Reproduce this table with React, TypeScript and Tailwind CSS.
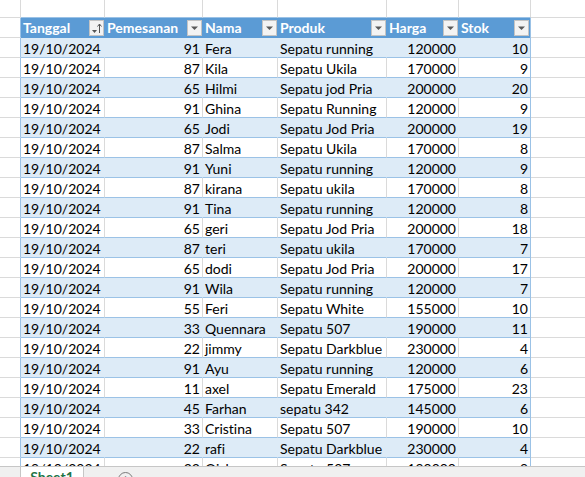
import React from 'react';

type Row = [string, number, string, string, number, number];

const rows: Row[] = [
  ['19/10/2024', 91, 'Fera', 'Sepatu running', 120000, 10],
  ['19/10/2024', 87, 'Kila', 'Sepatu Ukila', 170000, 9],
  ['19/10/2024', 65, 'Hilmi', 'Sepatu jod Pria', 200000, 20],
  ['19/10/2024', 91, 'Ghina', 'Sepatu Running', 120000, 9],
  ['19/10/2024', 65, 'Jodi', 'Sepatu Jod Pria', 200000, 19],
  ['19/10/2024', 87, 'Salma', 'Sepatu Ukila', 170000, 8],
  ['19/10/2024', 91, 'Yuni', 'Sepatu running', 120000, 9],
  ['19/10/2024', 87, 'kirana', 'Sepatu ukila', 170000, 8],
  ['19/10/2024', 91, 'Tina', 'Sepatu running', 120000, 8],
  ['19/10/2024', 65, 'geri', 'Sepatu Jod Pria', 200000, 18],
  ['19/10/2024', 87, 'teri', 'Sepatu ukila', 170000, 7],
  ['19/10/2024', 65, 'dodi', 'Sepatu Jod Pria', 200000, 17],
  ['19/10/2024', 91, 'Wila', 'Sepatu running', 120000, 7],
  ['19/10/2024', 55, 'Feri', 'Sepatu White', 155000, 10],
  ['19/10/2024', 33, 'Quennara', 'Sepatu 507', 190000, 11],
  ['19/10/2024', 22, 'jimmy', 'Sepatu Darkblue', 230000, 4],
  ['19/10/2024', 91, 'Ayu', 'Sepatu running', 120000, 6],
  ['19/10/2024', 11, 'axel', 'Sepatu Emerald', 175000, 23],
  ['19/10/2024', 45, 'Farhan', 'sepatu 342', 145000, 6],
  ['19/10/2024', 33, 'Cristina', 'Sepatu 507', 190000, 10],
  ['19/10/2024', 22, 'rafi', 'Sepatu Darkblue', 230000, 4],
  ['19/10/2024', 33, 'Oishe', 'Sepatu 507', 190000, 9],
];

const widths = ['w-[84px]', 'w-[98px]', 'w-[75px]', 'w-[109px]', 'w-[72px]', 'w-[72px]'];
const headers = ['Tanggal', 'Pemesanan', 'Nama', 'Produk', 'Harga', 'Stok'];

const FilterButton = ({ sorted }: { sorted?: boolean }) => (
  <div className="w-[15px] h-[16px] shrink-0 mr-px bg-[#f3f3f3] border border-[#c4c4c4] flex items-center justify-center">
    {sorted ? (
      <svg width="13" height="14" viewBox="0 0 13 14">
        <path d="M2 9h5l-2.5 3z" fill="#555" />
        <path d="M9.5 3v9" stroke="#555" strokeWidth="1" />
        <path d="M7.5 5.5l2-2.5 2 2.5" stroke="#555" strokeWidth="1" fill="none" />
      </svg>
    ) : (
      <svg width="9" height="6" viewBox="0 0 9 6">
        <path d="M1 1.5h7l-3.5 3.5z" fill="#595959" />
      </svg>
    )}
  </div>
);

const App = () => {
  return (
    <div className="w-[585px] h-[477px] overflow-hidden bg-white flex flex-col font-['Lato',sans-serif] text-[14px] text-black [font-variant-ligatures:none]">
      <div className="flex-1 overflow-hidden">
        {/* row above the table */}
        <div className="flex h-[18px]">
          <div className="w-[21px] shrink-0 border-r border-b border-[#dadada]" />
          {widths.map((w, i) => (
            <div key={i} className={`${w} shrink-0 border-r border-[#dadada] border-b border-b-[#9bc2e6]`} />
          ))}
          <div className="flex-1 border-b border-[#dadada]" />
        </div>

        {/* header */}
        <div className="flex h-[20px]">
          <div className="w-[21px] shrink-0 border-r border-r-[#9bc2e6] border-b border-b-[#dadada]" />
          {headers.map((h, i) => (
            <div
              key={h}
              className={`${widths[i]} shrink-0 bg-[#5b9bd5] flex items-center justify-between pl-[2px] text-white font-bold ${i === 5 ? 'border-r border-r-[#9bc2e6]' : ''}`}
            >
              <span className="leading-[20px]">{h}</span>
              <FilterButton sorted={i === 0} />
            </div>
          ))}
          <div className="flex-1 border-b border-[#dadada]" />
        </div>

        {rows.map((r, idx) => {
          const band = idx % 2 === 0;
          const cell = band
            ? 'bg-[#ddebf7] border-r border-r-[#ddebf7] border-b border-b-[#9bc2e6]'
            : 'bg-white border-r border-r-[#dadada] border-b border-b-[#9bc2e6]';
          const last = band
            ? 'bg-[#ddebf7] border-r border-r-[#9bc2e6] border-b border-b-[#9bc2e6]'
            : 'bg-white border-r border-r-[#9bc2e6] border-b border-b-[#9bc2e6]';
          return (
            <div key={idx} className="flex h-[20px] leading-[19px] pt-px">
              <div className="w-[21px] shrink-0 -mt-px border-r border-r-[#9bc2e6] border-b border-b-[#dadada]" />
              <div className={`w-[84px] shrink-0 -mt-px pt-px pl-[2px] ${cell}`}>{r[0]}</div>
              <div className={`w-[98px] shrink-0 -mt-px pt-px pr-[2px] text-right ${cell}`}>{r[1]}</div>
              <div className={`w-[75px] shrink-0 -mt-px pt-px pl-[2px] ${cell}`}>{r[2]}</div>
              <div className={`w-[109px] shrink-0 -mt-px pt-px pl-[2px] whitespace-nowrap ${cell}`}>{r[3]}</div>
              <div className={`w-[72px] shrink-0 -mt-px pt-px pr-[2px] text-right ${cell}`}>{r[4]}</div>
              <div className={`w-[72px] shrink-0 -mt-px pt-px pr-[2px] text-right ${last}`}>{r[5]}</div>
              <div className="flex-1 -mt-px border-b border-[#dadada]" />
            </div>
          );
        })}
      </div>

      {/* sheet tabs */}
      <div className="h-[11px] shrink-0 bg-[#f0f0f0] border-t border-[#c6c6c6] flex items-start overflow-hidden">
        <div className="ml-[20px] -mt-px w-[64px] h-[20px] bg-white border-x border-[#c6c6c6] flex justify-center">
          <span className="mt-[3px] text-[14px] font-bold text-[#217346] leading-[16px]">Sheet1</span>
        </div>
        <div className="ml-[34px] mt-[5px] w-[15px] h-[15px] rounded-full border border-[#7a7a7a] flex justify-center">
          <span className="text-[#555] text-[13px] leading-[12px]">+</span>
        </div>
      </div>
    </div>
  );
};

export default App;
